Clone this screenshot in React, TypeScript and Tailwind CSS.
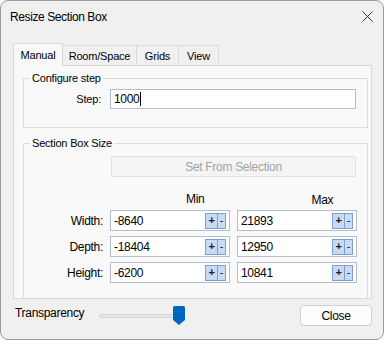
import React from "react";

const font = "font-['Segoe_UI','Liberation_Sans',Arial,sans-serif]";

const Spin = () => (
  <div className="flex h-[16px] mr-[3px] border border-[#7f9fd0]">
    <div className="w-[12px] bg-[#c7dbf5] flex items-center justify-center text-[11px] leading-none font-bold text-[#1e1e1e] border-r border-[#7f9fd0]">
      +
    </div>
    <div className="w-[7px] bg-[#c7dbf5] flex items-center justify-center text-[11px] leading-none text-[#1e1e1e]">
      -
    </div>
  </div>
);

const NumBox = ({ value }: { value: string }) => (
  <div className="w-[120px] h-[21px] flex items-center bg-white border border-[#b6bcc8]">
    <span className="flex-1 pl-[3px] text-[12px] tracking-[-0.3px] text-black">{value}</span>
    <Spin />
  </div>
);

const rows = [
  { label: "Width:", min: "-8640", max: "21893" },
  { label: "Depth:", min: "-18404", max: "12950" },
  { label: "Height:", min: "-6200", max: "10841" },
];

const tabs = [
  { t: "Room/Space", w: "w-[74px]" },
  { t: "Grids", w: "w-[42px]" },
  { t: "View", w: "w-[40px]" },
];

export default function App() {
  return (
    <div className={`${font} w-[384px] h-[340px] bg-[#f0f0f0] border border-[#9c9c9c] rounded-[8px] overflow-hidden flex flex-col text-[#1e1e1e]`}>
      {/* title bar */}
      <div className="h-[31px] flex items-center justify-between pl-[9px] pr-[10px]">
        <span className="text-[12px] tracking-[-0.4px] text-black">Resize Section Box</span>
        <svg width="11" height="11" viewBox="0 0 11 11">
          <path d="M0.5 0.5 L10.5 10.5 M10.5 0.5 L0.5 10.5" stroke="#333" strokeWidth="1" />
        </svg>
      </div>

      <div className="pl-[12px] pr-[11px] pt-[10px]">
        {/* tabs */}
        <div className="flex items-end h-[23px] text-[11px] tracking-[-0.2px] text-black">
          <div className="relative z-10 w-[50px] h-[23px] -mb-px pt-[3px] text-center bg-[#f9f9f9] border border-b-0 border-[#d9d9d9]">
            Manual
          </div>
          {tabs.map(({ t, w }) => (
            <div key={t} className={`${w} h-[20px] pt-[2px] text-center bg-[#f0f0f0] border border-l-0 border-b-0 border-[#dadada]`}>
              {t}
            </div>
          ))}
        </div>

        {/* panel */}
        <div className="h-[234px] bg-[#f9f9f9] border border-[#d9d9d9] pl-[9px] pr-[3px] pt-[5px] text-[11px] tracking-[-0.2px] text-black">
          <fieldset className="h-[57px] border border-[#dcdcdc]">
            <legend className="ml-[6px] px-[2px] leading-[14px]">Configure step</legend>
            <div className="flex items-center mt-[4px]">
              <span className="w-[77px] text-right">Step:</span>
              <div className="ml-[9px] mr-[11px] flex-1 h-[20px] flex items-center bg-white border border-[#b6bcc8] pl-[3px] text-[12px] tracking-[-0.3px]">
                1000<span className="w-px h-[14px] bg-black" />
              </div>
            </div>
          </fieldset>

          <fieldset className="mt-[8px] h-[163px] border border-[#dcdcdc] border-b-0">
            <legend className="ml-[6px] px-[2px] leading-[14px]">Section Box Size</legend>
            <div className="flex pl-[87px] pr-[11px] mt-[6px]">
              <div className="flex-1 h-[21px] flex items-center justify-center bg-[#f4f4f4] border border-[#e1e1e1] rounded-[2px] text-[#a3a3a3] text-[12px] tracking-[-0.3px]">
                Set From Selection
              </div>
            </div>
            <div className="flex mt-[13px] h-[17px] items-center text-[12px] tracking-[-0.3px]">
              <span className="ml-[162px]">Min</span>
              <span className="ml-[107px] pt-[3px]">Max</span>
            </div>
            <div className="flex flex-col gap-[5px] mt-[3px]">
              {rows.map((r) => (
                <div key={r.label} className="flex items-center">
                  <span className="w-[79px] text-right text-[12px] tracking-[-0.3px]">{r.label}</span>
                  <div className="ml-[7px] flex gap-[7px]">
                    <NumBox value={r.min} />
                    <NumBox value={r.max} />
                  </div>
                </div>
              ))}
            </div>
          </fieldset>
        </div>
      </div>

      {/* bottom row */}
      <div className="flex items-center px-[14px] mt-[6px] text-[12px] tracking-[-0.3px] text-black">
        <span className="w-[84px] -mt-[6px]">Transparency</span>
        <div className="flex items-center w-[86px]">
          <div className="w-[79px] h-[4px] bg-[#e6e6e6] border border-[#d6d6d6] rounded-[2px]" />
          <svg width="12" height="19" viewBox="0 0 12 19" className="-ml-[5px]">
            <path d="M1.5 0 H10.5 Q12 0 12 1.5 V14 L6 19 L0 14 V1.5 Q0 0 1.5 0 Z" fill="#0067c0" />
          </svg>
        </div>
        <div className="ml-auto mr-[-3px] w-[72px] h-[21px] flex items-center justify-center bg-[#fdfdfd] border border-[#cfcfcf] rounded-[4px]">
          Close
        </div>
      </div>
    </div>
  );
}
